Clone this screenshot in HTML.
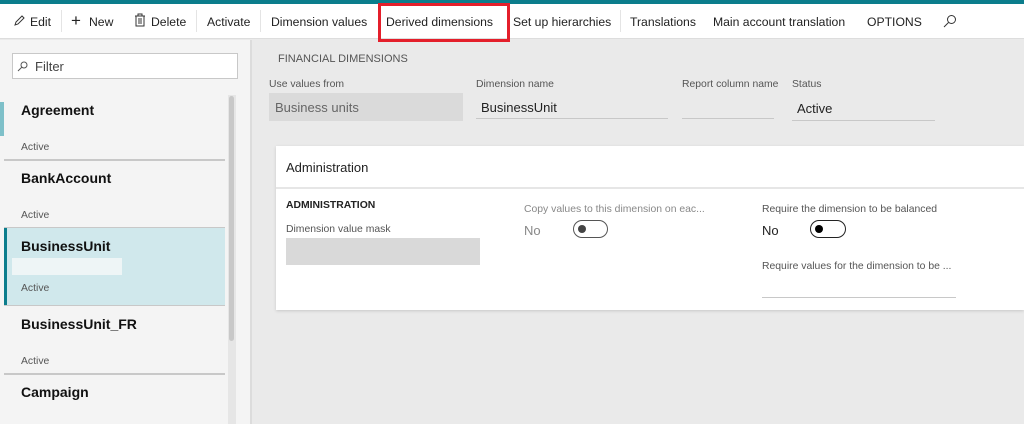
<!DOCTYPE html><html><head><style>
*{margin:0;padding:0;box-sizing:border-box}
body{width:1024px;height:424px;overflow:hidden;background:#eaeaea;font-family:"Liberation Sans",sans-serif;position:relative;color:#222}
.a{position:absolute}
.t{font-size:13px;color:#222;white-space:nowrap}
.b{font-size:12.2px;color:#222;white-space:nowrap;top:15px}
.s{font-size:10.4px;color:#555;white-space:nowrap}
.h{font-size:14px;font-weight:bold;color:#111;white-space:nowrap}
</style></head><body>
<div class="a" style="left:0;top:0;width:1024px;height:4px;background:#0b7d8c"></div>
<div class="a" style="left:0;top:4px;width:1024px;height:35px;background:#fff;border-bottom:1px solid #ddd"></div>
<svg class="a" style="left:13px;top:14px" width="13" height="13"><path d="M2 11 L3 8 L9 2 L11 4 L5 10 Z" fill="none" stroke="#333" stroke-width="1"/></svg>
<div class="a b" style="left:30px">Edit</div>
<div class="a" style="left:61px;top:10px;width:1px;height:22px;background:#e4e4e4"></div>
<div class="a t" style="left:71px;top:11px;font-size:17px;font-weight:300">+</div>
<div class="a b" style="left:89px">New</div>
<svg class="a" style="left:134px;top:13px" width="12" height="14"><path d="M1 3H11M4 3V1H8V3M2 3V13H10V3M5 5V11M7 5V11" fill="none" stroke="#333"/></svg>
<div class="a b" style="left:151px">Delete</div>
<div class="a" style="left:196px;top:10px;width:1px;height:22px;background:#e4e4e4"></div>
<div class="a b" style="left:207px">Activate</div>
<div class="a" style="left:260px;top:10px;width:1px;height:22px;background:#e4e4e4"></div>
<div class="a b" style="left:271px">Dimension values</div>
<div class="a" style="left:378px;top:3px;width:132px;height:39px;border:3px solid #e41f2b"></div>
<div class="a b" style="left:386px">Derived dimensions</div>
<div class="a b" style="left:513px">Set up hierarchies</div>
<div class="a" style="left:620px;top:10px;width:1px;height:22px;background:#e4e4e4"></div>
<div class="a b" style="left:630px">Translations</div>
<div class="a b" style="left:713px">Main account translation</div>
<div class="a b" style="left:867px">OPTIONS</div>
<svg class="a" style="left:943px;top:14px" width="14" height="14"><circle cx="8.5" cy="5.5" r="4" fill="none" stroke="#333"/><path d="M5.5 8.5L1 13" stroke="#333"/></svg>
<div class="a" style="left:0;top:40px;width:250px;height:384px;background:#f4f4f4"></div>
<div class="a" style="left:250px;top:40px;width:2px;height:384px;background:#dcdcdc"></div>
<div class="a" style="left:12px;top:53px;width:226px;height:26px;background:#fff;border:1px solid #c8c8c8"></div>
<svg class="a" style="left:17px;top:61px" width="11" height="11"><circle cx="7" cy="4" r="3" fill="none" stroke="#555"/><path d="M5 6L1 10" stroke="#555"/></svg>
<div class="a t" style="left:35px;top:59px;color:#444">Filter</div>
<div class="a" style="left:0;top:102px;width:4px;height:34px;background:#7ec0c9"></div>
<div class="a" style="left:228px;top:95px;width:8px;height:329px;background:#e6e6e6"></div>
<div class="a" style="left:229px;top:96px;width:5px;height:245px;background:#c8c8c8;border-radius:3px"></div>
<div class="a" style="left:4px;top:159px;width:221px;height:2px;background:#c8c8c8"></div>
<div class="a" style="left:4px;top:227px;width:221px;height:2px;background:#c8c8c8"></div>
<div class="a" style="left:4px;top:228px;width:221px;height:77px;background:#d0e8ec;border-left:3px solid #0b7d8c"></div>
<div class="a" style="left:12px;top:258px;width:110px;height:17px;background:#eef5f6"></div>
<div class="a" style="left:4px;top:305px;width:221px;height:1px;background:#c8c8c8"></div>
<div class="a" style="left:4px;top:373px;width:221px;height:2px;background:#c8c8c8"></div>
<div class="a h" style="left:21px;top:102px">Agreement</div>
<div class="a s" style="left:21px;top:142px">Active</div>
<div class="a h" style="left:21px;top:170px">BankAccount</div>
<div class="a s" style="left:21px;top:210px">Active</div>
<div class="a h" style="left:21px;top:238px">BusinessUnit</div>
<div class="a s" style="left:21px;top:283px">Active</div>
<div class="a h" style="left:21px;top:316px">BusinessUnit_FR</div>
<div class="a s" style="left:21px;top:356px">Active</div>
<div class="a h" style="left:21px;top:384px">Campaign</div>
<div class="a s" style="left:278px;top:53px;font-size:11px">FINANCIAL DIMENSIONS</div>
<div class="a s" style="left:269px;top:79px">Use values from</div>
<div class="a" style="left:269px;top:93px;width:194px;height:28px;background:#dadada"></div>
<div class="a t" style="left:275px;top:100px;color:#666">Business units</div>
<div class="a s" style="left:476px;top:79px">Dimension name</div>
<div class="a t" style="left:481px;top:100px">BusinessUnit</div>
<div class="a" style="left:476px;top:118px;width:192px;height:1px;background:#c8c8c8"></div>
<div class="a s" style="left:682px;top:79px">Report column name</div>
<div class="a" style="left:682px;top:118px;width:92px;height:1px;background:#c8c8c8"></div>
<div class="a s" style="left:792px;top:79px">Status</div>
<div class="a t" style="left:797px;top:101px">Active</div>
<div class="a" style="left:792px;top:120px;width:143px;height:1px;background:#c8c8c8"></div>
<div class="a" style="left:276px;top:146px;width:748px;height:164px;background:#fff;box-shadow:0 1px 3px rgba(0,0,0,.15)"></div>
<div class="a t" style="left:286px;top:160px">Administration</div>
<div class="a" style="left:276px;top:187px;width:748px;height:2px;background:#e6e6e6"></div>
<div class="a s" style="left:286px;top:200px;font-weight:bold;color:#222">ADMINISTRATION</div>
<div class="a s" style="left:286px;top:224px">Dimension value mask</div>
<div class="a" style="left:286px;top:238px;width:194px;height:27px;background:#d9d9d9"></div>
<div class="a s" style="left:524px;top:204px;color:#888">Copy values to this dimension on eac...</div>
<div class="a t" style="left:524px;top:223px;color:#888">No</div>
<div class="a" style="left:573px;top:220px;width:35px;height:18px;border:1px solid #555;border-radius:9px"></div>
<div class="a" style="left:578px;top:225px;width:8px;height:8px;background:#444;border-radius:50%"></div>
<div class="a s" style="left:762px;top:204px">Require the dimension to be balanced</div>
<div class="a t" style="left:762px;top:223px">No</div>
<div class="a" style="left:810px;top:220px;width:36px;height:18px;border:1px solid #222;border-radius:9px"></div>
<div class="a" style="left:815px;top:225px;width:8px;height:8px;background:#000;border-radius:50%"></div>
<div class="a s" style="left:762px;top:261px">Require values for the dimension to be ...</div>
<div class="a" style="left:762px;top:297px;width:194px;height:1px;background:#c8c8c8"></div>
</body></html>
